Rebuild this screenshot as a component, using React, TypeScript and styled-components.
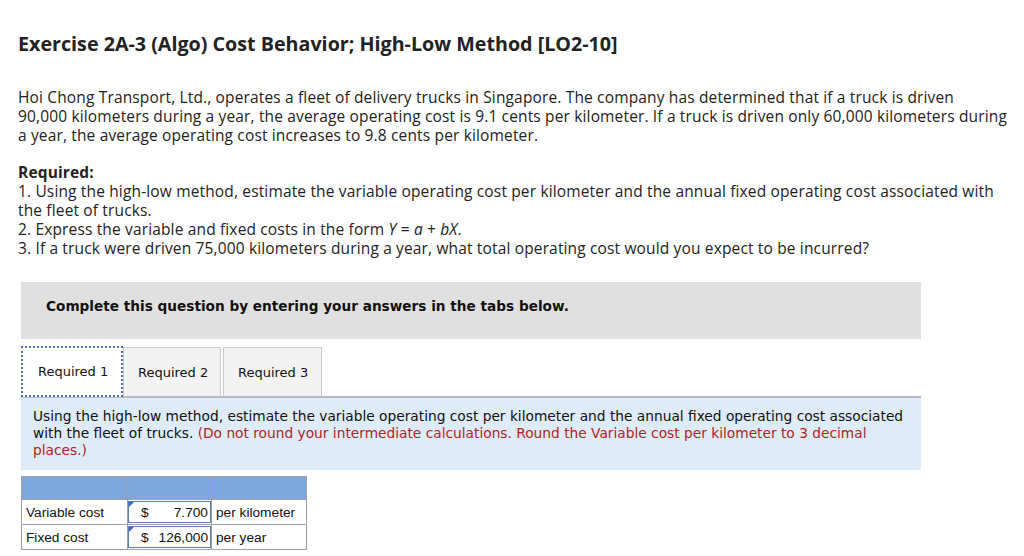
import React from "react";
import styled, { createGlobalStyle } from "styled-components";

const Global = createGlobalStyle`
  html, body { margin: 0; padding: 0; background: #fff; }
  body { font-family: "Open Sans", "Lato", sans-serif; color: #1a1a1a; }
`;

const Page = styled.div`
  padding: 30px 0 0 18px;
  width: 1006px;
  box-sizing: border-box;
`;

const Title = styled.h1`
  margin: 0;
  font-family: "Open Sans", sans-serif;
  font-weight: 700;
  font-size: 19.7px;
  line-height: 28px;
  color: #222;
`;

const Para = styled.p`
  margin: 0;
  font-size: 15.5px;
  letter-spacing: 0.15px;
  line-height: 19px;
  color: #222;
  white-space: nowrap;
`;

const Intro = styled(Para)`
  margin-top: 30px;
`;

const ReqHead = styled(Para)`
  margin-top: 18px;
  font-weight: 700;
`;

const Formula = styled.i`
  font-style: italic;
`;

const Prompt = styled.div`
  margin-top: 24px;
  margin-left: 3px;
  width: 900px;
  height: 57px;
  background: #e0e0e0;
  display: flex;
  align-items: center;
  padding: 0 0 10px 25px;
  box-sizing: border-box;
  font-family: "DejaVu Sans", Verdana, sans-serif;
  font-weight: 700;
  font-size: 13.65px;
  color: #111;
`;

const Tabs = styled.div`
  margin-left: 3px;
  margin-top: 7px;
  display: flex;
  align-items: flex-end;
  height: 50px;
`;

const Tab = styled.div<{ $active?: boolean; $w: number }>`
  box-sizing: border-box;
  width: ${(p) => p.$w}px;
  margin-right: ${(p) => (p.$active ? "0" : "2px")};
  height: ${(p) => (p.$active ? "51px" : "49px")};
  padding-left: ${(p) => (p.$active ? "15px" : "14px")};
  display: flex;
  align-items: center;
  font-family: "DejaVu Sans", Verdana, sans-serif;
  font-size: 13px;
  color: #111;
  background: ${(p) => (p.$active ? "#fff" : "#f2f2f2")};
  border: ${(p) => (p.$active ? "2px dotted #4a6fb8" : "1px solid #c9c9c9")};
  border-bottom: ${(p) => (p.$active ? "2px dotted #4a6fb8" : "none")};
  margin-bottom: ${(p) => (p.$active ? "-1px" : "0")};
  position: relative;
  z-index: 1;
`;

const Panel = styled.div`
  margin-left: 3px;
  width: 900px;
  box-sizing: border-box;
  background: #deebf8;
  border-top: 2px solid #b7bcc2;
  padding: 10px 10px 11px 12px;
  font-family: "DejaVu Sans", Verdana, sans-serif;
  font-size: 13.75px;
  line-height: 17px;
  color: #111;
  white-space: nowrap;
`;

const Note = styled.span`
  color: #b22222;
`;

const Table = styled.table`
  margin: 6px 0 0 3px;
  border-collapse: collapse;
  font-family: "Liberation Sans", Arial, sans-serif;
  font-size: 13.7px;
  color: #111;
`;

const HeadCell = styled.th<{ $w: number }>`
  width: ${(p) => p.$w}px;
  height: 23px;
  padding: 0;
  background: #7ea8dd;
  border: 1px solid #a0a0a0;
  box-sizing: border-box;
`;

const Cell = styled.td`
  height: 24px;
  padding: 0 4px;
  border: 1px solid #a0a0a0;
  white-space: nowrap;
`;

const InputCell = styled.td`
  height: 24px;
  padding: 0;
  border: 1px solid #a0a0a0;
`;

const Input = styled.div`
  position: relative;
  height: 22px;
  border: 1px solid #5b7fb0;
  display: flex;
  align-items: center;
  justify-content: space-between;
  padding: 0 2px 0 12px;
  box-sizing: border-box;
  background: #fff;
  &::before {
    content: "";
    position: absolute;
    left: 0;
    top: 0;
    border-left: 5px solid #3a6fc0;
    border-bottom: 5px solid transparent;
  }
`;

const Dollar = styled.span``;
const Amount = styled.span``;

export default function App() {
  return (
    <>
      <Global />
      <Page>
        <Title>Exercise 2A-3 (Algo) Cost Behavior; High-Low Method [LO2-10]</Title>
        <Intro>
          Hoi Chong Transport, Ltd., operates a fleet of delivery trucks in Singapore. The company has determined that if a truck is driven
          <br />
          90,000 kilometers during a year, the average operating cost is 9.1 cents per kilometer. If a truck is driven only 60,000 kilometers during
          <br />
          a year, the average operating cost increases to 9.8 cents per kilometer.
        </Intro>
        <ReqHead>Required:</ReqHead>
        <Para>
          1. Using the high-low method, estimate the variable operating cost per kilometer and the annual fixed operating cost associated with
          <br />
          the fleet of trucks.
        </Para>
        <Para>
          2. Express the variable and fixed costs in the form <Formula>Y</Formula> = <Formula>a</Formula> + <Formula>bX</Formula>.
        </Para>
        <Para>3. If a truck were driven 75,000 kilometers during a year, what total operating cost would you expect to be incurred?</Para>
        <Prompt>Complete this question by entering your answers in the tabs below.</Prompt>
        <Tabs>
          <Tab $active $w={102}>Required 1</Tab>
          <Tab $w={98}>Required 2</Tab>
          <Tab $w={99}>Required 3</Tab>
        </Tabs>
        <Panel>
          Using the high-low method, estimate the variable operating cost per kilometer and the annual fixed operating cost associated
          <br />
          with the fleet of trucks. <Note>(Do not round your intermediate calculations. Round the Variable cost per kilometer to 3 decimal</Note>
          <br />
          <Note>places.)</Note>
        </Panel>
        <Table>
          <thead>
            <tr>
              <HeadCell $w={106} />
              <HeadCell $w={84} />
              <HeadCell $w={95} />
            </tr>
          </thead>
          <tbody>
            <tr>
              <Cell>Variable cost</Cell>
              <InputCell>
                <Input>
                  <Dollar>$</Dollar>
                  <Amount>7.700</Amount>
                </Input>
              </InputCell>
              <Cell>per kilometer</Cell>
            </tr>
            <tr>
              <Cell>Fixed cost</Cell>
              <InputCell>
                <Input>
                  <Dollar>$</Dollar>
                  <Amount>126,000</Amount>
                </Input>
              </InputCell>
              <Cell>per year</Cell>
            </tr>
          </tbody>
        </Table>
      </Page>
    </>
  );
}
